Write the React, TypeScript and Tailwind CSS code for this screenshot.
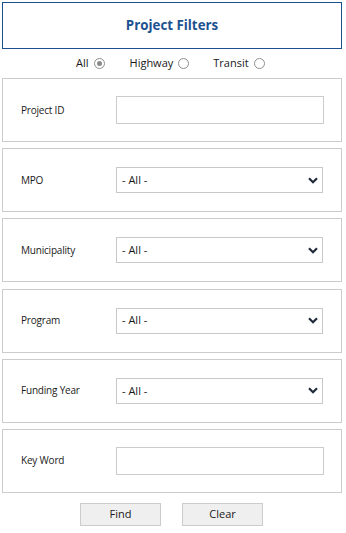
import React from "react";

const font = { fontFamily: '"Open Sans", "Noto Sans", sans-serif' };

function Radio({ checked }: { checked?: boolean }) {
  return (
    <span className="inline-flex w-[11px] h-[11px] rounded-full border border-[#8f8f8f] bg-white items-center justify-center">
      {checked && <span className="w-[5px] h-[5px] rounded-full bg-[#8a8a8a]" />}
    </span>
  );
}

function Chevron() {
  return (
    <svg width="10" height="7" viewBox="0 0 10 7" className="shrink-0">
      <path d="M1 1.2 L5 5.2 L9 1.2" fill="none" stroke="#1f2a3a" strokeWidth="2.2" />
    </svg>
  );
}

function Panel({ label, select }: { label: string; select?: boolean }) {
  return (
    <div className="w-[340px] h-[64px] mx-[2px] border border-[#cccccc] flex items-center">
      <div className="w-[113px] pl-[18px] text-[10px] tracking-[-0.2px] text-[#1a1a1a]">{label}</div>
      {select ? (
        <div className="w-[207px] h-[26px] border border-[#c8c8c8] bg-white flex items-center justify-between pl-[5px] pr-[4px] text-[11px] text-[#1a1a1a]">
          <span>- All -</span>
          <Chevron />
        </div>
      ) : (
        <div className="w-[208px] h-[28px] border border-[#cccccc] bg-white" />
      )}
    </div>
  );
}

export default function App() {
  return (
    <div className="w-[346px] h-[533px] bg-white flex flex-col" style={font}>
      <div className="mt-[2px] mx-[2px] w-[340px] h-[47px] border border-[#1b4f8e] flex items-center justify-center">
        <span className="text-[13.3px] font-bold text-[#1d5291]">Project Filters</span>
      </div>
      <div className="h-[29px] flex items-center pl-[76px] text-[11px] text-[#1a1a1a]">
        <span className="flex items-center gap-[5px]">All <Radio checked /></span>
        <span className="flex items-center gap-[5px] ml-[25px]">Highway <Radio /></span>
        <span className="flex items-center gap-[5px] ml-[24px]">Transit <Radio /></span>
      </div>
      <div className="flex flex-col gap-[6.2px]">
        <Panel label="Project ID" />
        <Panel label="MPO" select />
        <Panel label="Municipality" select />
        <Panel label="Program" select />
        <Panel label="Funding Year" select />
        <Panel label="Key Word" />
      </div>
      <div className="flex justify-center gap-[21px] mt-[10px] pr-[3px]">
        <button className="w-[81px] h-[23px] bg-[#efefef] border border-[#cccccc] text-[11px] text-[#1a1a1a]">Find</button>
        <button className="w-[81px] h-[23px] bg-[#efefef] border border-[#cccccc] text-[11px] text-[#1a1a1a]">Clear</button>
      </div>
    </div>
  );
}
